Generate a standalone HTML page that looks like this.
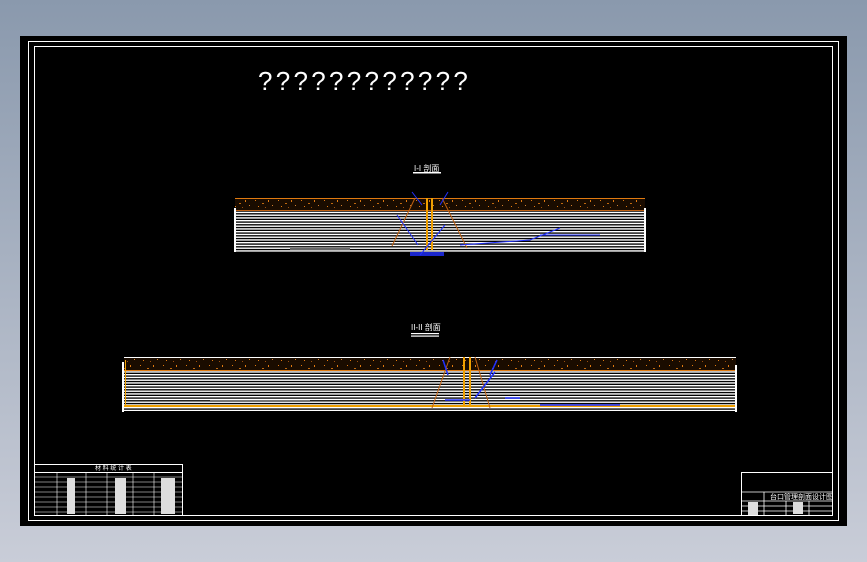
<!DOCTYPE html>
<html><head><meta charset="utf-8"><style>
html,body{margin:0;padding:0;width:867px;height:562px;overflow:hidden;background:linear-gradient(#8a99ad,#c9cdd8);}
svg{position:absolute;left:0;top:0}
</style></head><body>
<svg width="867" height="562" xmlns="http://www.w3.org/2000/svg" font-family="Liberation Sans, sans-serif">
<defs>
<pattern id="st" width="4" height="2.75" patternUnits="userSpaceOnUse"><rect width="4" height="1.4" fill="#fff"/></pattern>
<pattern id="soil" width="23" height="11" patternUnits="userSpaceOnUse"><rect width="23" height="11" fill="#1a0c00"/><rect x="2" y="2" width="1" height="1" fill="#e07a10"/><rect x="9" y="5" width="2" height="1" fill="#c06a10"/><rect x="15" y="2" width="1" height="2" fill="#e07a10"/><rect x="19" y="7" width="1" height="1" fill="#d08030"/><rect x="5" y="8" width="1" height="1" fill="#e07a10"/><rect x="12" y="9" width="1" height="1" fill="#9a5010"/></pattern>
</defs>
<rect x="20" y="36" width="827" height="490" fill="#000"/>
<rect x="28.5" y="41.5" width="810" height="479" fill="none" stroke="#fff"/>
<rect x="34.5" y="46.5" width="798" height="469" fill="none" stroke="#fff"/>
<text x="258" y="90" fill="#fff" font-size="26" letter-spacing="3.3">????????????</text>

<!-- section 1 -->
<text x="414" y="171" fill="#fff" font-size="8">I-I 剖面</text>
<rect x="413" y="172" width="28" height="1.5" fill="#fff"/>
<rect x="235" y="198" width="410" height="12" fill="url(#soil)"/>
<rect x="235" y="198" width="410" height="1" fill="#e07a10"/>
<rect x="235" y="210" width="410" height="1" fill="#c06010"/>
<rect x="235" y="211" width="410" height="41" fill="url(#st)"/>
<rect x="234" y="208" width="2" height="44" fill="#fff"/>
<rect x="644" y="208" width="2" height="44" fill="#fff"/>
<rect x="426" y="198" width="2" height="52" fill="#f0a000"/><rect x="431" y="198" width="2" height="52" fill="#f0a000"/>
<path d="M415 198 L392 246 M442 198 L467 248" stroke="#c06010" fill="none"/>
<path d="M412 192 L422 205 M448 192 L440 205 M397 215 L418 245 M420 255 L445 225 M460 245 L530 240 L560 228 M540 235 L600 235" stroke="#2030ff" fill="none"/>
<rect x="410" y="252" width="34" height="4" fill="#2030ff" opacity=".8"/>
<rect x="290" y="248" width="60" height="2" fill="#666"/>

<!-- section 2 -->
<text x="411" y="330" fill="#fff" font-size="8">II-II 剖面</text>
<rect x="411" y="333" width="28" height="1.2" fill="#fff"/><rect x="411" y="335.5" width="28" height="1.2" fill="#fff"/>
<rect x="124" y="357" width="612" height="13" fill="url(#soil)"/>
<rect x="124" y="357" width="612" height="1" fill="#fff"/>
<rect x="124" y="370" width="612" height="1" fill="#e07a10"/>
<rect x="124" y="371" width="612" height="40" fill="url(#st)"/>
<rect x="124" y="405" width="612" height="2" fill="#f0a000"/>
<rect x="122" y="362" width="2" height="50" fill="#fff"/><rect x="125" y="360" width="1" height="46" fill="#f0a000"/>
<rect x="735" y="365" width="2" height="47" fill="#fff"/>
<rect x="463" y="357" width="2" height="50" fill="#f0a000"/><rect x="469" y="357" width="2" height="50" fill="#f0a000"/>
<path d="M400 357 L382 408 M425 357 L440 408" stroke="#c06010" fill="none" transform="translate(50 0)"/>
<path d="M443 360 L448 375 M497 360 L490 375 M475 398 L495 372 M445 400 L470 400 M505 398 L520 398 M540 405 L620 405" stroke="#2030ff" stroke-width="1.5" fill="none"/>
<rect x="210" y="400" width="100" height="2" fill="#777"/>

<!-- table bottom-left -->
<rect x="34.5" y="464.5" width="148" height="51" fill="none" stroke="#fff"/>
<line x1="34" y1="472.5" x2="183" y2="472.5" stroke="#fff"/>
<text x="95" y="470" fill="#fff" font-size="6">材 料 统 计 表</text>
<g stroke="#fff" stroke-width=".6"><line x1="35" y1="477" x2="183" y2="477"/><line x1="35" y1="482" x2="183" y2="482"/><line x1="35" y1="487" x2="183" y2="487"/><line x1="35" y1="492" x2="183" y2="492"/><line x1="35" y1="497" x2="183" y2="497"/><line x1="35" y1="502" x2="183" y2="502"/><line x1="35" y1="507" x2="183" y2="507"/><line x1="35" y1="512" x2="183" y2="512"/>
<line x1="57" y1="472" x2="57" y2="516"/><line x1="86" y1="472" x2="86" y2="516"/><line x1="107" y1="472" x2="107" y2="516"/><line x1="133" y1="472" x2="133" y2="516"/><line x1="154" y1="472" x2="154" y2="516"/></g>
<g fill="#ddd"><rect x="67" y="478" width="8" height="36"/><rect x="115" y="478" width="11" height="36"/><rect x="161" y="478" width="14" height="36"/></g>

<!-- title block -->
<rect x="741.5" y="472.5" width="91" height="43" fill="none" stroke="#fff"/>
<g stroke="#fff" stroke-width=".8"><line x1="741" y1="492" x2="833" y2="492"/><line x1="741" y1="501" x2="833" y2="501"/><line x1="741" y1="506" x2="833" y2="506"/><line x1="741" y1="511" x2="833" y2="511"/><line x1="764" y1="492" x2="764" y2="516"/><line x1="786" y1="501" x2="786" y2="516"/><line x1="809" y1="501" x2="809" y2="516"/></g>
<text x="770" y="499" fill="#fff" font-size="7">台口管理剖面设计图</text>
<rect x="748" y="502" width="10" height="13" fill="#ddd"/><rect x="793" y="502" width="10" height="12" fill="#ddd"/>
</svg>
</body></html>
